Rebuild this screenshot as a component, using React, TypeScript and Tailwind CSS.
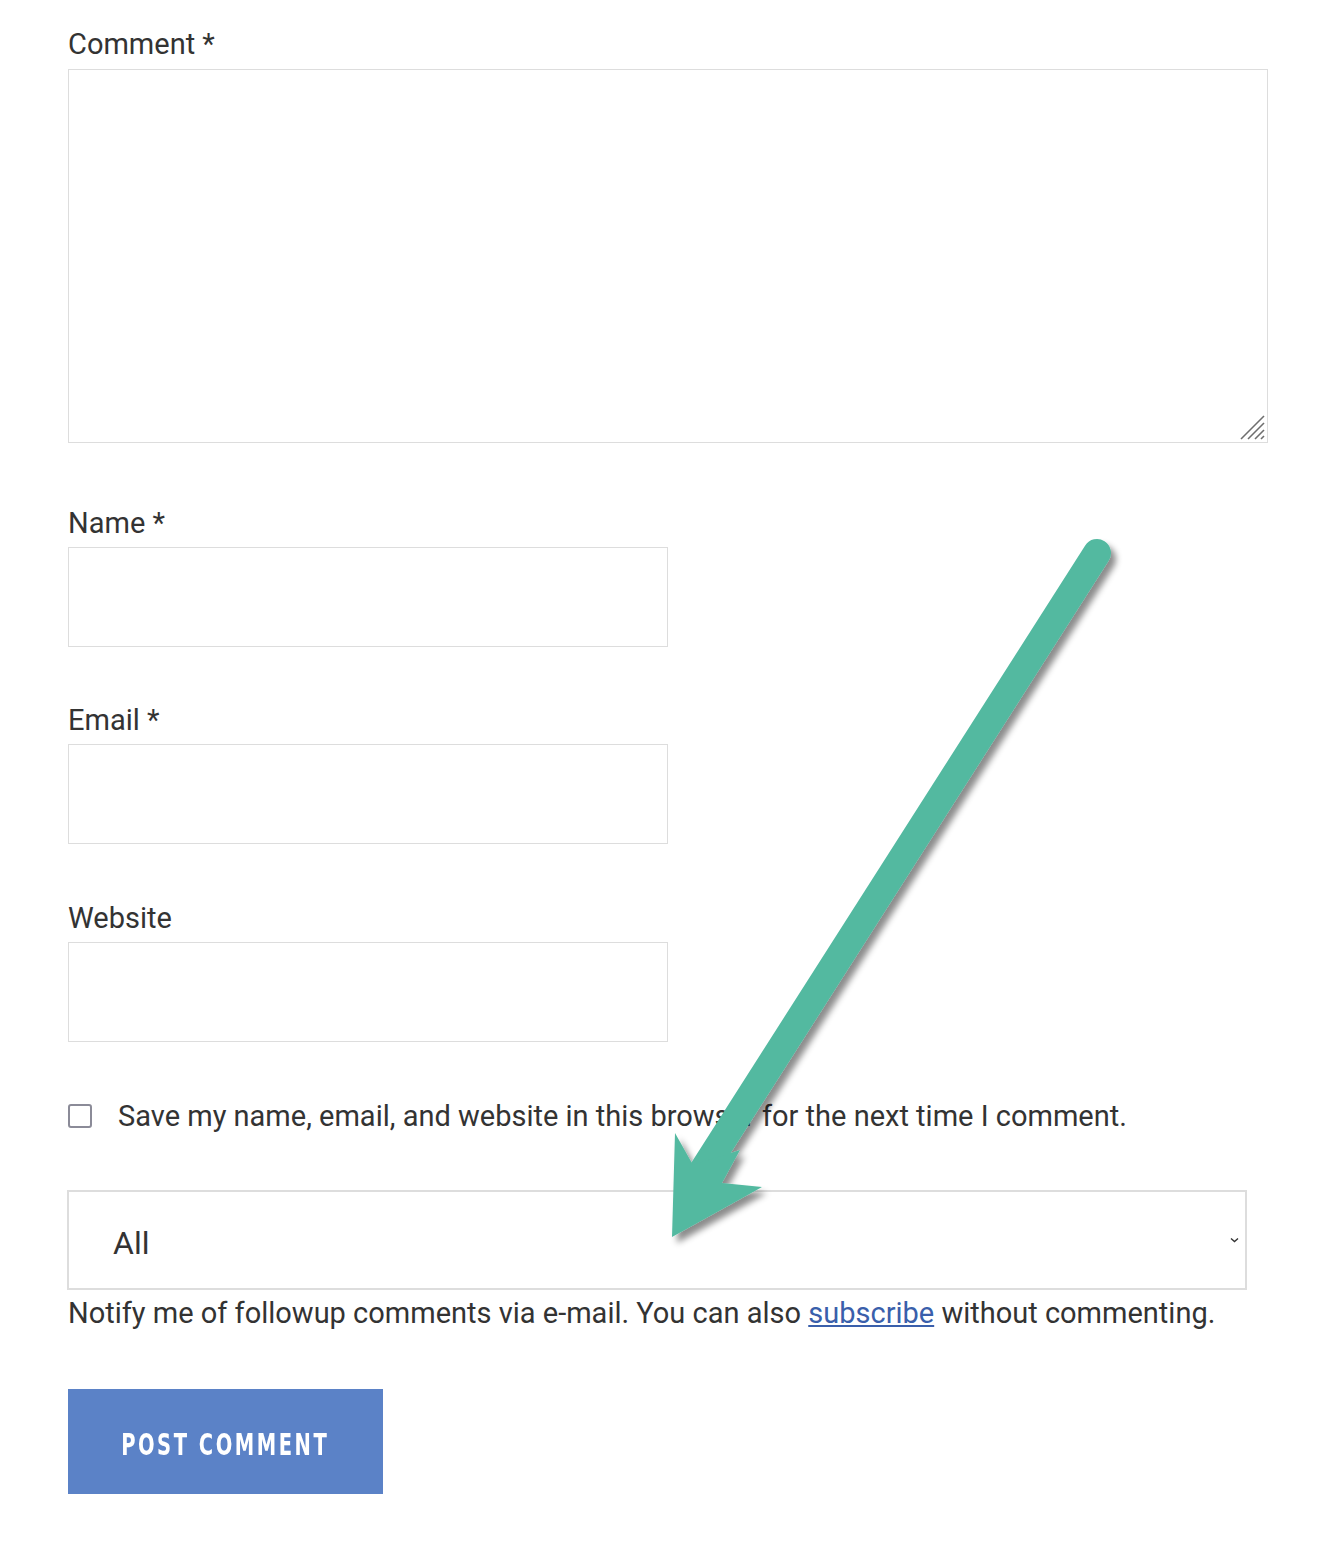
import React from 'react';

const font = { fontFamily: 'Roboto, "Liberation Sans", sans-serif' };

const Field = ({ label, className = '' }: { label: string; className?: string }) => (
  <div className={className}>
    <label className="block text-[29px] leading-[40px] text-[#333] mb-[4px]">{label}</label>
    <input type="text" className="block w-[600px] h-[100px] border border-[#ddd] bg-white outline-none" />
  </div>
);

const Arrow = () => (
  <svg
    className="absolute left-0 top-0 pointer-events-none"
    width="1340"
    height="1560"
    viewBox="0 0 1340 1560"
  >
    <defs>
      <filter id="sh" x="-20%" y="-20%" width="140%" height="140%">
        <feDropShadow dx="5" dy="6" stdDeviation="3" floodColor="#000" floodOpacity="0.45" />
      </filter>
    </defs>
    <g filter="url(#sh)" fill="#53b9a0" stroke="none">
      <line x1="1097" y1="553" x2="702" y2="1172" stroke="#53b9a0" strokeWidth="28" strokeLinecap="round" />
      <polygon points="675,1133 672,1237 762,1187 722,1183 740,1150 693,1165" />
    </g>
  </svg>
);

export default function App() {
  return (
    <div className="relative w-[1340px] h-[1560px] bg-white" style={font}>
      <div className="pl-[68px] pt-[24px]">
        <div>
          <label className="block text-[29px] leading-[40px] text-[#333] mb-[5px]">Comment *</label>
          <div className="relative w-[1200px] h-[374px]">
            <textarea className="block w-full h-full border border-[#ddd] bg-white outline-none resize-none" />
            <svg className="absolute right-[3px] bottom-[3px]" width="26" height="26" viewBox="0 0 26 26">
              <g stroke="#6f6f6f" strokeWidth="1.6">
                <line x1="2" y1="25" x2="25" y2="2" />
                <line x1="9" y1="25" x2="25" y2="9" />
                <line x1="16" y1="25" x2="25" y2="16" />
                <line x1="22" y1="25" x2="25" y2="22" />
              </g>
            </svg>
          </div>
        </div>

        <Field label="Name *" className="mt-[60px]" />
        <Field label="Email *" className="mt-[53px]" />
        <Field label="Website" className="mt-[54px]" />

        <div className="mt-[58px] flex items-center h-[32px]">
          <span className="w-[24px] h-[24px] rounded-[3px] border-2 border-[#8b8b98] bg-white" />
          <span className="ml-[26px] text-[29px] leading-[32px] text-[#333]">
            Save my name, email, and website in this browser for the next time I comment.
          </span>
        </div>

        <div className="mt-[58px] -ml-px w-[1180px] h-[100px] border-2 border-[#ddd] flex items-center justify-between pl-[44px] pr-[6px] pt-[6px]">
          <span className="text-[32px] text-[#333]">All</span>
          <svg width="9" height="6" viewBox="0 0 9 6" className="-mt-[6px]">
            <path d="M1 1.5 L4.5 4.5 L8 1.5" fill="none" stroke="#333" strokeWidth="1.4" />
          </svg>
        </div>

        <p className="text-[29px] leading-[46px] text-[#333]">
          Notify me of followup comments via e-mail. You can also{' '}
          <a href="#" className="text-[#3a5fab] underline">subscribe</a> without commenting.
        </p>

        <button className="mt-[53px] w-[315px] h-[105px] bg-[#5b82c7] text-white flex items-center justify-center pt-[5px]">
          <span
            className="inline-block text-[31px] leading-none font-bold tracking-[4px] scale-x-[0.63] whitespace-nowrap"
            style={{ fontFamily: '"DejaVu Sans", sans-serif' }}
          >
            POST COMMENT
          </span>
        </button>
      </div>
      <Arrow />
    </div>
  );
}
